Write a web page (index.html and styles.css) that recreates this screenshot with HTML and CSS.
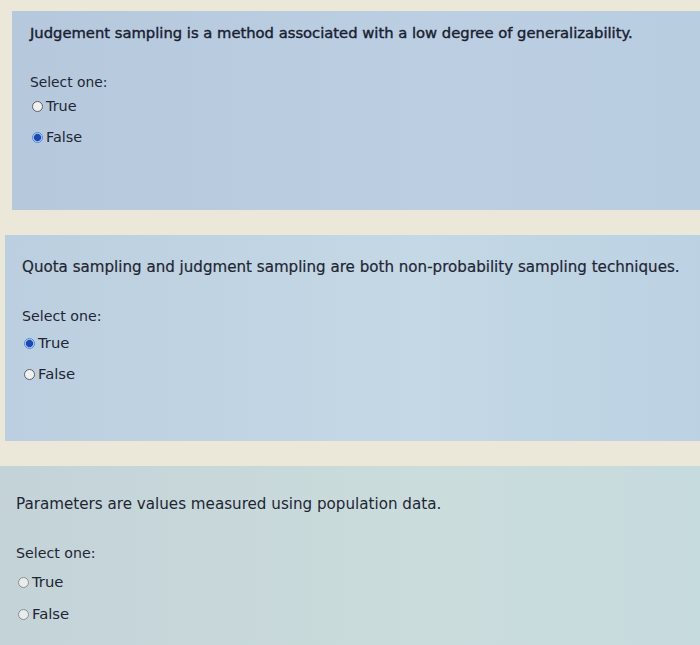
FILE: index.html
```html
<!DOCTYPE html>
<html>
<head>
<meta charset="utf-8">
<link rel="stylesheet" href="styles.css">
</head>
<body>
<main class="page">
  <section class="que que-1">
    <p class="qtext">Judgement sampling is a method associated with a low degree of generalizability.</p>
    <p class="prompt">Select one:</p>
    <div class="answers">
      <label class="opt"><span class="radio"></span>True</label>
      <label class="opt"><span class="radio checked"></span>False</label>
    </div>
  </section>
  <section class="que que-2">
    <p class="qtext">Quota sampling and judgment sampling are both non-probability sampling techniques.</p>
    <p class="prompt">Select one:</p>
    <div class="answers">
      <label class="opt"><span class="radio checked"></span>True</label>
      <label class="opt"><span class="radio"></span>False</label>
    </div>
  </section>
  <section class="que que-3">
    <p class="qtext">Parameters are values measured using population data.</p>
    <p class="prompt">Select one:</p>
    <div class="answers">
      <label class="opt"><span class="radio"></span>True</label>
      <label class="opt"><span class="radio"></span>False</label>
    </div>
  </section>
</main>
</body>
</html>
```
FILE: styles.css
```css
html, body {
  margin: 0;
  padding: 0;
}
body {
  width: 700px;
  height: 645px;
  overflow: hidden;
  background: #ebe8da;
  font-family: "DejaVu Sans", "Noto Sans", sans-serif;
  color: #1e2633;
}
.page {
  display: flex;
  flex-direction: column;
  gap: 25px;
  height: 100%;
  box-sizing: border-box;
  padding-top: 11px;
}
.que {
  display: flex;
  flex-direction: column;
  box-sizing: border-box;
  --ans-top: 4px;
  --ans-gap: 11px;
}
.que p {
  margin: 0;
}
.que-1 {
  height: 199px;
  margin-left: 12px;
  padding: 12px 0 0 18px;
  background: linear-gradient(90deg, #b5c8dc 0%, #bccfe2 60%, #b9cde1 100%);
  font-size: 14.4px;
}
.que-2 {
  height: 206px;
  margin-left: 5px;
  padding: 22px 0 0 17px;
  background: linear-gradient(90deg, #bccfe0 0%, #c4d8e5 60%, #bcd2e3 100%);
  font-size: 14.8px;
  --ans-top: 7px;
}
.que-3 {
  flex: 1;
  margin-left: 0;
  padding: 28px 0 0 16px;
  background: linear-gradient(90deg, #c3d3d8 0%, #cbdcdc 60%, #c6dbde 100%);
  font-size: 14.8px;
  --ans-top: 9px;
  --ans-gap: 12px;
}
.qtext {
  line-height: 20px;
  font-size: 15.1px;
  -webkit-text-stroke: 0.2px currentColor;
}
.que-1 .qtext {
  font-size: 14.75px;
  color: #182030;
  -webkit-text-stroke: 0.4px currentColor;
}
.que-3 .qtext {
  font-size: 15.15px;
  -webkit-text-stroke: 0;
}
.prompt {
  margin-top: 29px !important;
  font-size: 0.96em;
  line-height: 20px;
}
.answers {
  display: flex;
  flex-direction: column;
  gap: var(--ans-gap);
  margin-top: var(--ans-top);
  padding-left: 2px;
}
.opt {
  display: flex;
  align-items: center;
  gap: 3px;
  font-size: 1em;
  line-height: 20px;
}
.radio {
  width: 9px;
  height: 9px;
  border-radius: 50%;
  border: 1.5px solid #5c6168;
  background: #f1f1ef;
  box-sizing: content-box;
}
.que-3 .radio {
  border-color: #8a8f90;
  background: #e9ecea;
}
.radio.checked {
  border-color: #4a88dc;
  background: radial-gradient(circle, #1c48b0 0 3.2px, #7fa9e6 3.8px, #d6e4f7 4.5px);
}
```
